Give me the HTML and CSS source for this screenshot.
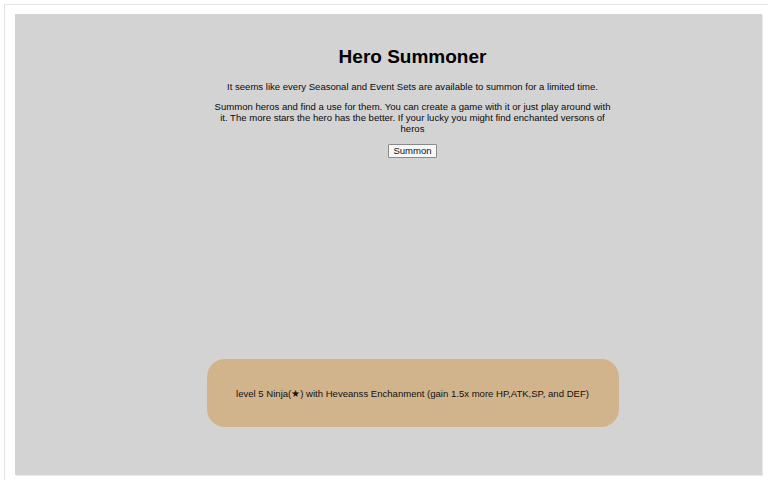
FILE: index.html
```html
<!DOCTYPE html>
<html lang="en">
<head>
    <meta charset="UTF-8">
    <meta name="viewport" content="width=device-width, initial-scale=1.0">
    <title>Hero Summoner</title>
    <link rel="stylesheet" href="styles.css">
</head>
<body>
    <div class="frame">
        <div class="stage">
            <div class="column">
                <h1>Hero Summoner</h1>
                <p class="intro">It seems like every Seasonal and Event Sets are available to summon for a limited time.</p>
                <p class="about">Summon heros and find a use for them. You can create a game with it or just play around with it. The more stars the hero has the better. If your lucky you might find enchanted versons of heros</p>
                <button class="summon-btn" onclick="summon()">Summon</button>
                <div id="result" class="result">level 5 Ninja(&#9733;) with Heveanss Enchanment (gain 1.5x more HP,ATK,SP, and DEF)</div>
            </div>
        </div>
    </div>

    <script>
        function summon() {
            let heroes = ["Ninja", "Knight", "Archer", "Mage", "Samurai"];
            let hero = heroes[Math.floor(Math.random() * heroes.length)];
            let level = Math.floor(Math.random() * 10) + 1;
            document.getElementById("result").textContent = `level ${level} ${hero}(\u2605)`;
        }
    </script>
</body>
</html>
```

FILE: styles.css
```css
body {
    margin: 0;
    background: #fff;
    font-family: 'Liberation Sans', Arial, sans-serif;
    color: #111;
    overflow: hidden;
}
.frame {
    margin: 4px 0 0 4px;
    height: 480px;
    border-top: 1px solid #e4e4e4;
    border-left: 1px solid #e4e4e4;
    padding: 9px 0 0 10px;
    box-sizing: border-box;
}
.stage {
    width: 747px;
    height: 461px;
    background: #d3d3d3;
    box-shadow: 1px 1px 0 #e8e8e8;
    padding: 32px 0 0 48px;
    box-sizing: border-box;
}
.column {
    width: 412px;
    margin: 0 auto;
    display: flex;
    flex-direction: column;
    align-items: center;
    text-align: center;
}
h1 {
    font-size: 19px;
    line-height: 22px;
    margin: 0;
    color: #000;
}
p {
    font-size: 9.55px;
    line-height: 11px;
    max-width: 398px;
    margin: 0;
    color: #0a0a0a;
}
.intro {
    margin-top: 13px;
}
.about {
    margin-top: 9px;
}
.summon-btn {
    margin-top: 10px;
    height: 14px;
    padding: 0 4px;
    font-family: inherit;
    font-size: 9.55px;
    line-height: 12px;
    background: #f7f7f7;
    border: 1px solid #8a8a8a;
    border-radius: 1px;
    color: #111;
    cursor: pointer;
}
.result {
    margin-top: 201px;
    width: 100%;
    height: 68px;
    box-sizing: border-box;
    background: #d2b48c;
    border-radius: 18px;
    display: flex;
    align-items: center;
    justify-content: center;
    font-size: 9.55px;
    color: #111;
}
```
